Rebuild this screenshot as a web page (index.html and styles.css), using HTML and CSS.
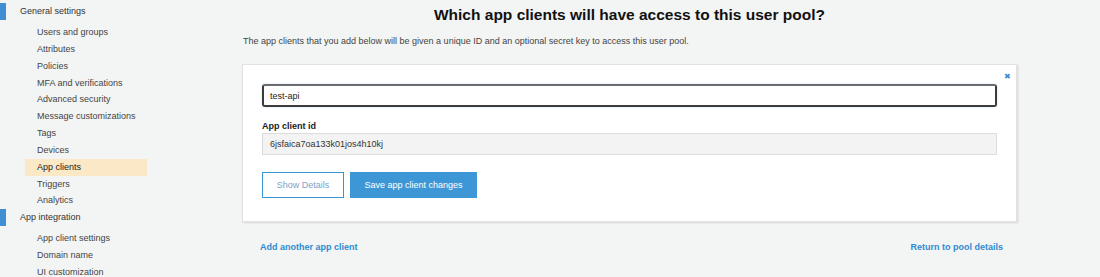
FILE: index.html
```html
<!DOCTYPE html>
<html lang="en">
<head>
    <meta charset="UTF-8">
    <meta name="viewport" content="width=device-width, initial-scale=1.0">
    <title>App clients</title>
    <link rel="stylesheet" href="styles.css">
</head>
<body>
    <div class="page">
        <div class="sidebar">
            <div class="nav-group">General settings</div>
            <div class="nav-item">Users and groups</div>
            <div class="nav-item">Attributes</div>
            <div class="nav-item">Policies</div>
            <div class="nav-item">MFA and verifications</div>
            <div class="nav-item">Advanced security</div>
            <div class="nav-item">Message customizations</div>
            <div class="nav-item">Tags</div>
            <div class="nav-item">Devices</div>
            <div class="nav-item active">App clients</div>
            <div class="nav-item">Triggers</div>
            <div class="nav-item">Analytics</div>
            <div class="nav-group">App integration</div>
            <div class="nav-item">App client settings</div>
            <div class="nav-item">Domain name</div>
            <div class="nav-item">UI customization</div>
        </div>

        <div class="main">
            <div class="content">
                <h2>Which app clients will have access to this user pool?</h2>
                <p class="intro">The app clients that you add below will be given a unique ID and an optional secret key to access this user pool.</p>

                <div class="card">
                    <span class="remove">&#x2716;</span>
                    <input type="text" class="name-input" value="test-api">

                    <label class="field-label">App client id</label>
                    <div class="readonly-input">6jsfaica7oa133k01jos4h10kj</div>

                    <div class="actions">
                        <button class="btn-outline">Show Details</button>
                        <button class="btn-primary">Save app client changes</button>
                    </div>
                </div>

                <div class="links">
                    <a href="#">Add another app client</a>
                    <a href="#">Return to pool details</a>
                </div>
            </div>
        </div>
    </div>
</body>
</html>
```

FILE: styles.css
```css
body {
    margin: 0;
    font-family: "Liberation Sans", Arial, sans-serif;
    background-color: #f3f4f4;
    color: #444;
}
.page {
    display: flex;
    height: 277px;
    overflow: hidden;
}
.sidebar {
    width: 159px;
    flex-shrink: 0;
    padding-top: 3px;
    font-size: 9px;
}
.nav-group {
    position: relative;
    height: 17px;
    line-height: 17px;
    padding-left: 20px;
    margin-bottom: 4px;
    color: #333;
}
.nav-group::before {
    content: "";
    position: absolute;
    left: 0;
    top: 0;
    width: 6px;
    height: 17px;
    background-color: #3f8fd2;
}
.nav-item {
    height: 16.85px;
    line-height: 16.85px;
    margin-left: 25px;
    width: 110px;
    padding-left: 12px;
    color: #444;
}
.nav-item.active {
    background-color: #fbe8c6;
    color: #222;
}
.main {
    flex: 1;
}
.content {
    width: 775px;
    margin: 0 auto;
}
h2 {
    margin: 5px 0 0;
    font-size: 15.5px;
    line-height: 20px;
    text-align: center;
    color: #111;
}
.intro {
    margin: 11px 0 0 1px;
    font-size: 9px;
    line-height: 10px;
    color: #444;
}
.card {
    position: relative;
    margin-top: 18px;
    padding: 19px 19px 23px 19px;
    background-color: #fff;
    border: 1px solid #e2e2e2;
    box-shadow: 1px 1px 2px rgba(0, 0, 0, 0.12);
    box-sizing: border-box;
    height: 158px;
}
.remove {
    position: absolute;
    top: 7px;
    right: 5px;
    font-size: 8px;
    color: #3a8fd3;
}
.name-input {
    display: block;
    width: 100%;
    box-sizing: border-box;
    height: 23px;
    padding: 0 6px;
    border: 2px solid #3b3b3b;
    border-top-color: #6b6b6b;
    border-radius: 3px;
    box-shadow: 0 0 3px #cfe3f6;
    font-family: "Liberation Sans", Arial, sans-serif;
    font-size: 9px;
    color: #222;
    outline: none;
}
.field-label {
    display: block;
    margin-top: 12px;
    font-size: 9px;
    font-weight: bold;
    line-height: 14px;
    color: #222;
}
.readonly-input {
    height: 22px;
    line-height: 20px;
    box-sizing: border-box;
    padding: 0 7px;
    border: 1px solid #dcdcdc;
    background-color: #f3f3f3;
    font-size: 9px;
    color: #333;
}
.actions {
    display: flex;
    gap: 6px;
    margin-top: 17px;
}
button {
    height: 26px;
    box-sizing: border-box;
    font-family: "Liberation Sans", Arial, sans-serif;
    font-size: 9px;
    cursor: pointer;
}
.btn-outline {
    width: 82px;
    background-color: #fff;
    border: 1px solid #3a93d3;
    color: #7f9fc7;
}
.btn-primary {
    width: 127px;
    background-color: #3d97d6;
    border: 1px solid #3d97d6;
    color: #fff;
}
.links {
    display: flex;
    justify-content: space-between;
    margin-top: 20px;
    padding: 0 14px 0 18px;
    font-size: 9px;
    font-weight: bold;
}
.links a {
    color: #2f8bd0;
    text-decoration: none;
}
```
